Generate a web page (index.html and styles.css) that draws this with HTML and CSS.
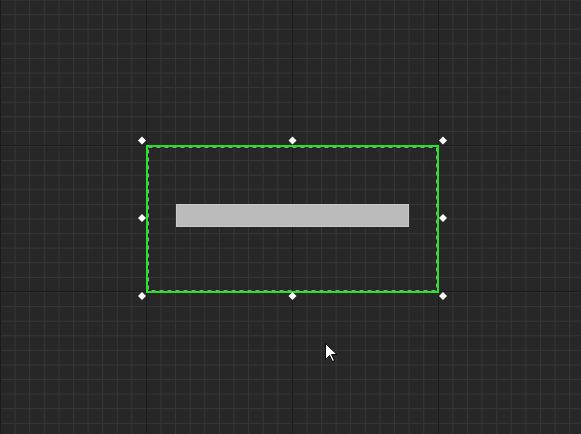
FILE: index.html
```html
<!DOCTYPE html>
<html>
<head>
<meta charset="utf-8">
<link rel="stylesheet" href="styles.css">
</head>
<body>
<div class="canvas">
  <svg class="overlay" width="581" height="434" viewBox="0 0 581 434">
    <rect class="bar" x="176.5" y="204.5" width="232" height="22"/>
    <rect class="sel-line" x="147" y="146" width="291" height="146"/>
    <rect class="ants-base" x="148.5" y="147.5" width="288" height="143"/>
    <rect class="ants" x="148.5" y="147.5" width="288" height="143"/>
    <g class="handles">
      <polygon points="142,136.5 146,140.5 142,144.5 138,140.5"/>
      <polygon points="292.5,136.5 296.5,140.5 292.5,144.5 288.5,140.5"/>
      <polygon points="443,136.5 447,140.5 443,144.5 439,140.5"/>
      <polygon points="142,214 146,218 142,222 138,218"/>
      <polygon points="443,214 447,218 443,222 439,218"/>
      <polygon points="142,292 146,296 142,300 138,296"/>
      <polygon points="292.5,292 296.5,296 292.5,300 288.5,296"/>
      <polygon points="443,292 447,296 443,300 439,296"/>
    </g>
    <path class="cursor" d="M325.5 343.5 L325.5 359.5 L329.5 355.5 L332.5 361.5 L334.5 360.5 L331.5 354.5 L337 354.5 Z"/>
  </svg>
</div>
</body>
</html>
```

FILE: styles.css
```css
html, body {
  margin: 0;
  padding: 0;
  background: #262626;
}

.canvas {
  position: relative;
  width: 581px;
  height: 434px;
  overflow: hidden;
  background-color: #272727;
  background-image:
    linear-gradient(to right, #1b1b1b 1px, transparent 1px),
    linear-gradient(to bottom, #1b1b1b 1px, transparent 1px),
    linear-gradient(to right, #363636 1px, transparent 1px),
    linear-gradient(to bottom, #363636 1px, transparent 1px);
  background-size: 146px 146px, 146px 146px, 14.6px 14.6px, 14.6px 14.6px;
  background-position: 0 0, 0 -1px, 0 0, 0 -0.4px;
}

.overlay {
  position: absolute;
  left: 0;
  top: 0;
  display: block;
}

.bar {
  fill: #bbbbbb;
  stroke: #c9c9c9;
  stroke-width: 1;
}

.sel-line {
  fill: none;
  stroke: #1ee81e;
  stroke-width: 2;
}

.ants-base {
  fill: none;
  stroke: #161616;
  stroke-width: 1;
}

.ants {
  fill: none;
  stroke: #9a9a9a;
  stroke-width: 1;
  stroke-dasharray: 4 4;
}

.handles polygon {
  fill: #ffffff;
}

.cursor {
  fill: #ffffff;
  stroke: #000000;
  stroke-width: 1;
  stroke-linejoin: miter;
}
```
